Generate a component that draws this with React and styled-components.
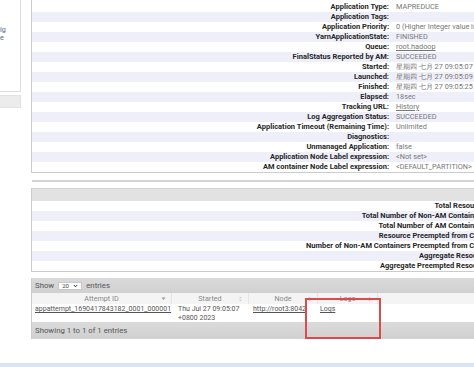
import React from 'react'
import styled, { createGlobalStyle } from 'styled-components'

let GlobalStyle = createGlobalStyle`
  html, body {
    margin: 0;
    padding: 0;
    width: 474px;
    height: 367px;
    overflow: hidden;
    background: #fff;
  }
  body {
    font-family: Roboto, "Liberation Sans", sans-serif;
    font-size: 7.2px;
    color: #333;
  }
`

let Page = styled.div`
  display: flex;
  flex-direction: column;
  height: 367px;
`
let Body = styled.div`
  display: flex;
  gap: 10px;
  align-items: flex-start;
`
let Sidebar = styled.div`
  width: 21px;
  flex-shrink: 0;
  display: flex;
  flex-direction: column;
  gap: 3px;
`
let NavBox = styled.div`
  height: 92px;
  box-sizing: border-box;
  border-right: 1px solid #ddd;
  border-bottom: 1px solid #ddd;
  padding-top: 26px;
  display: flex;
  flex-direction: column;
  line-height: 8px;
  color: #4f6384;
`
let NavBar = styled.div`
  height: 11px;
  background: #ececec;
  border: 1px solid #e2e2e2;
  border-left: none;
`
let Main = styled.div`
  flex: 0 0 auto;
  width: 700px;
  display: flex;
  flex-direction: column;
`
let InfoBox = styled.div`
  border-left: 1px solid #ccc;
  border-bottom: 1px solid #ccc;
  padding-top: ${p => p.$top || 0}px;
`
let InfoHead = styled.div`
  height: 12px;
  background: #e2e2e2;
  border-top: 1px solid #d2d2d2;
`
let Row = styled.div`
  display: grid;
  grid-template-columns: ${p => p.$label}px 1fr;
  height: 10px;
  line-height: 10px;
  background: ${p => (p.$odd ? '#efeffa' : '#fff')};
  white-space: nowrap;
`
let Label = styled.div`
  text-align: right;
  font-weight: 700;
  font-size: 7.5px;
  color: #262626;
`
let Value = styled.div`
  padding-left: 7px;
  font-size: 7.3px;
  color: #777;
`
let ValueLink = styled.span`
  text-decoration: underline;
  color: #777;
`
let Rule = styled.div`
  height: 2px;
  background: #d4d4d4;
  margin: 7px 0 6px 1px;
`
let DataBox = styled.div`
  position: relative;
  margin-top: 6px;
  border-left: 1px solid #ccc;
`
let Bar = styled.div`
  display: flex;
  align-items: center;
  gap: 4px;
  height: ${p => p.$h}px;
  padding-left: 3px;
  background: linear-gradient(#dadada, #d0d0d0);
  font-size: 7.8px;
  color: #555;
`
let Select = styled.span`
  display: inline-flex;
  align-items: center;
  justify-content: space-between;
  width: 24px;
  height: 8px;
  box-sizing: border-box;
  padding: 0 3px;
  background: #fff;
  border: 1px solid #c8c8c8;
  font-size: 6px;
  color: #444;
`
let Grid = styled.div`
  display: grid;
  grid-template-columns: 140px 77px 69px 60px 300px;
`
let Th = styled.div`
  position: relative;
  height: 11px;
  line-height: 11px;
  text-align: center;
  background: #f4f4f4;
  color: #888;
  border-right: 1px solid #e4e4e4;
`
let Sort = styled.svg`
  position: absolute;
  right: 5px;
  top: 3px;
`
let Td = styled.div`
  height: 18px;
  padding: 1px 0 0 ${p => p.$pad || 3}px;
  line-height: 9px;
  font-size: 7px;
  color: #555;
  white-space: ${p => (p.$wrap ? 'normal' : 'nowrap')};
  overflow: hidden;
  box-sizing: border-box;
`
let Link = styled.span`
  text-decoration: underline;
  color: #555;
`
let Mark = styled.div`
  position: absolute;
  left: 273px;
  top: 20px;
  width: 76px;
  height: 41px;
  box-sizing: border-box;
  border: 2px solid #dc4a4a;
`
let BottomStrip = styled.div`
  margin-top: auto;
  height: 4px;
  background: #dbe4f0;
`

let info = [
  ['Application Type:', 'MAPREDUCE'],
  ['Application Tags:', ''],
  ['Application Priority:', '0 (Higher Integer value indicates higher priority)'],
  ['YarnApplicationState:', 'FINISHED'],
  ['Queue:', 'root.hadoop', true],
  ['FinalStatus Reported by AM:', 'SUCCEEDED'],
  ['Started:', '星期四 七月 27 09:05:07 +0800 2023'],
  ['Launched:', '星期四 七月 27 09:05:09 +0800 2023'],
  ['Finished:', '星期四 七月 27 09:05:25 +0800 2023'],
  ['Elapsed:', '18sec'],
  ['Tracking URL:', 'History', true],
  ['Log Aggregation Status:', 'SUCCEEDED'],
  ['Application Timeout (Remaining Time):', 'Unlimited'],
  ['Diagnostics:', ''],
  ['Unmanaged Application:', 'false'],
  ['Application Node Label expression:', '<Not set>'],
  ['AM container Node Label expression:', '<DEFAULT_PARTITION>']
]

let metrics = [
  'Total Resource Preempted:',
  'Total Number of Non-AM Containers Preempted:',
  'Total Number of AM Containers Preempted:',
  'Resource Preempted from Current Attempt:',
  'Number of Non-AM Containers Preempted from Current Attempt:',
  'Aggregate Resource Allocation:',
  'Aggregate Preempted Resource Allocation:'
]

function SortIcon({ active }) {
  if (active) {
    return (
      <Sort width="5" height="5" viewBox="0 0 5 5">
        <path d="M0.5 1.5 L4.5 1.5 L2.5 4 Z" fill="#999" />
      </Sort>
    )
  }
  return (
    <Sort width="5" height="6" viewBox="0 0 5 6">
      <path d="M2.5 0.5 L4 2.3 L1 2.3 Z M2.5 5.5 L4 3.7 L1 3.7 Z" fill="#cfcfcf" />
    </Sort>
  )
}

export default function App() {
  return (
    <Page>
      <GlobalStyle />
      <Body>
        <Sidebar>
          <NavBox>
            <span>ig</span>
            <span>e</span>
          </NavBox>
          <NavBar />
        </Sidebar>
        <Main>
          <InfoBox $top={2}>
            {info.map(([k, v, link], i) => (
              <Row key={k} $label={357} $odd={i % 2 === 1}>
                <Label>{k}</Label>
                <Value>{link ? <ValueLink>{v}</ValueLink> : v}</Value>
              </Row>
            ))}
          </InfoBox>
          <Rule />
          <InfoBox>
            <InfoHead />
            {metrics.map((k, i) => (
              <Row key={k} $label={494} $odd={i % 2 === 1}>
                <Label>{k}</Label>
                <Value>0</Value>
              </Row>
            ))}
          </InfoBox>
          <DataBox>
            <Bar $h={15}>
              Show
              <Select>
                20
                <svg width="5" height="4" viewBox="0 0 5 4">
                  <path d="M0.8 1 L2.5 2.8 L4.2 1" stroke="#333" strokeWidth="1" fill="none" />
                </svg>
              </Select>
              entries
            </Bar>
            <Grid>
              <Th>Attempt ID<SortIcon active /></Th>
              <Th>Started<SortIcon /></Th>
              <Th>Node<SortIcon /></Th>
              <Th>Logs<SortIcon /></Th>
              <Th>Nodes blacklisted by the app</Th>
              <Td><Link>appattempt_1690417843182_0001_000001</Link></Td>
              <Td $wrap $pad={6}>Thu Jul 27 09:05:07 +0800 2023</Td>
              <Td $pad={4}><Link>http://root3:8042</Link></Td>
              <Td $pad={2}><Link>Logs</Link></Td>
              <Td />
            </Grid>
            <Bar $h={17}>Showing 1 to 1 of 1 entries</Bar>
            <Mark />
          </DataBox>
        </Main>
      </Body>
      <BottomStrip />
    </Page>
  )
}
